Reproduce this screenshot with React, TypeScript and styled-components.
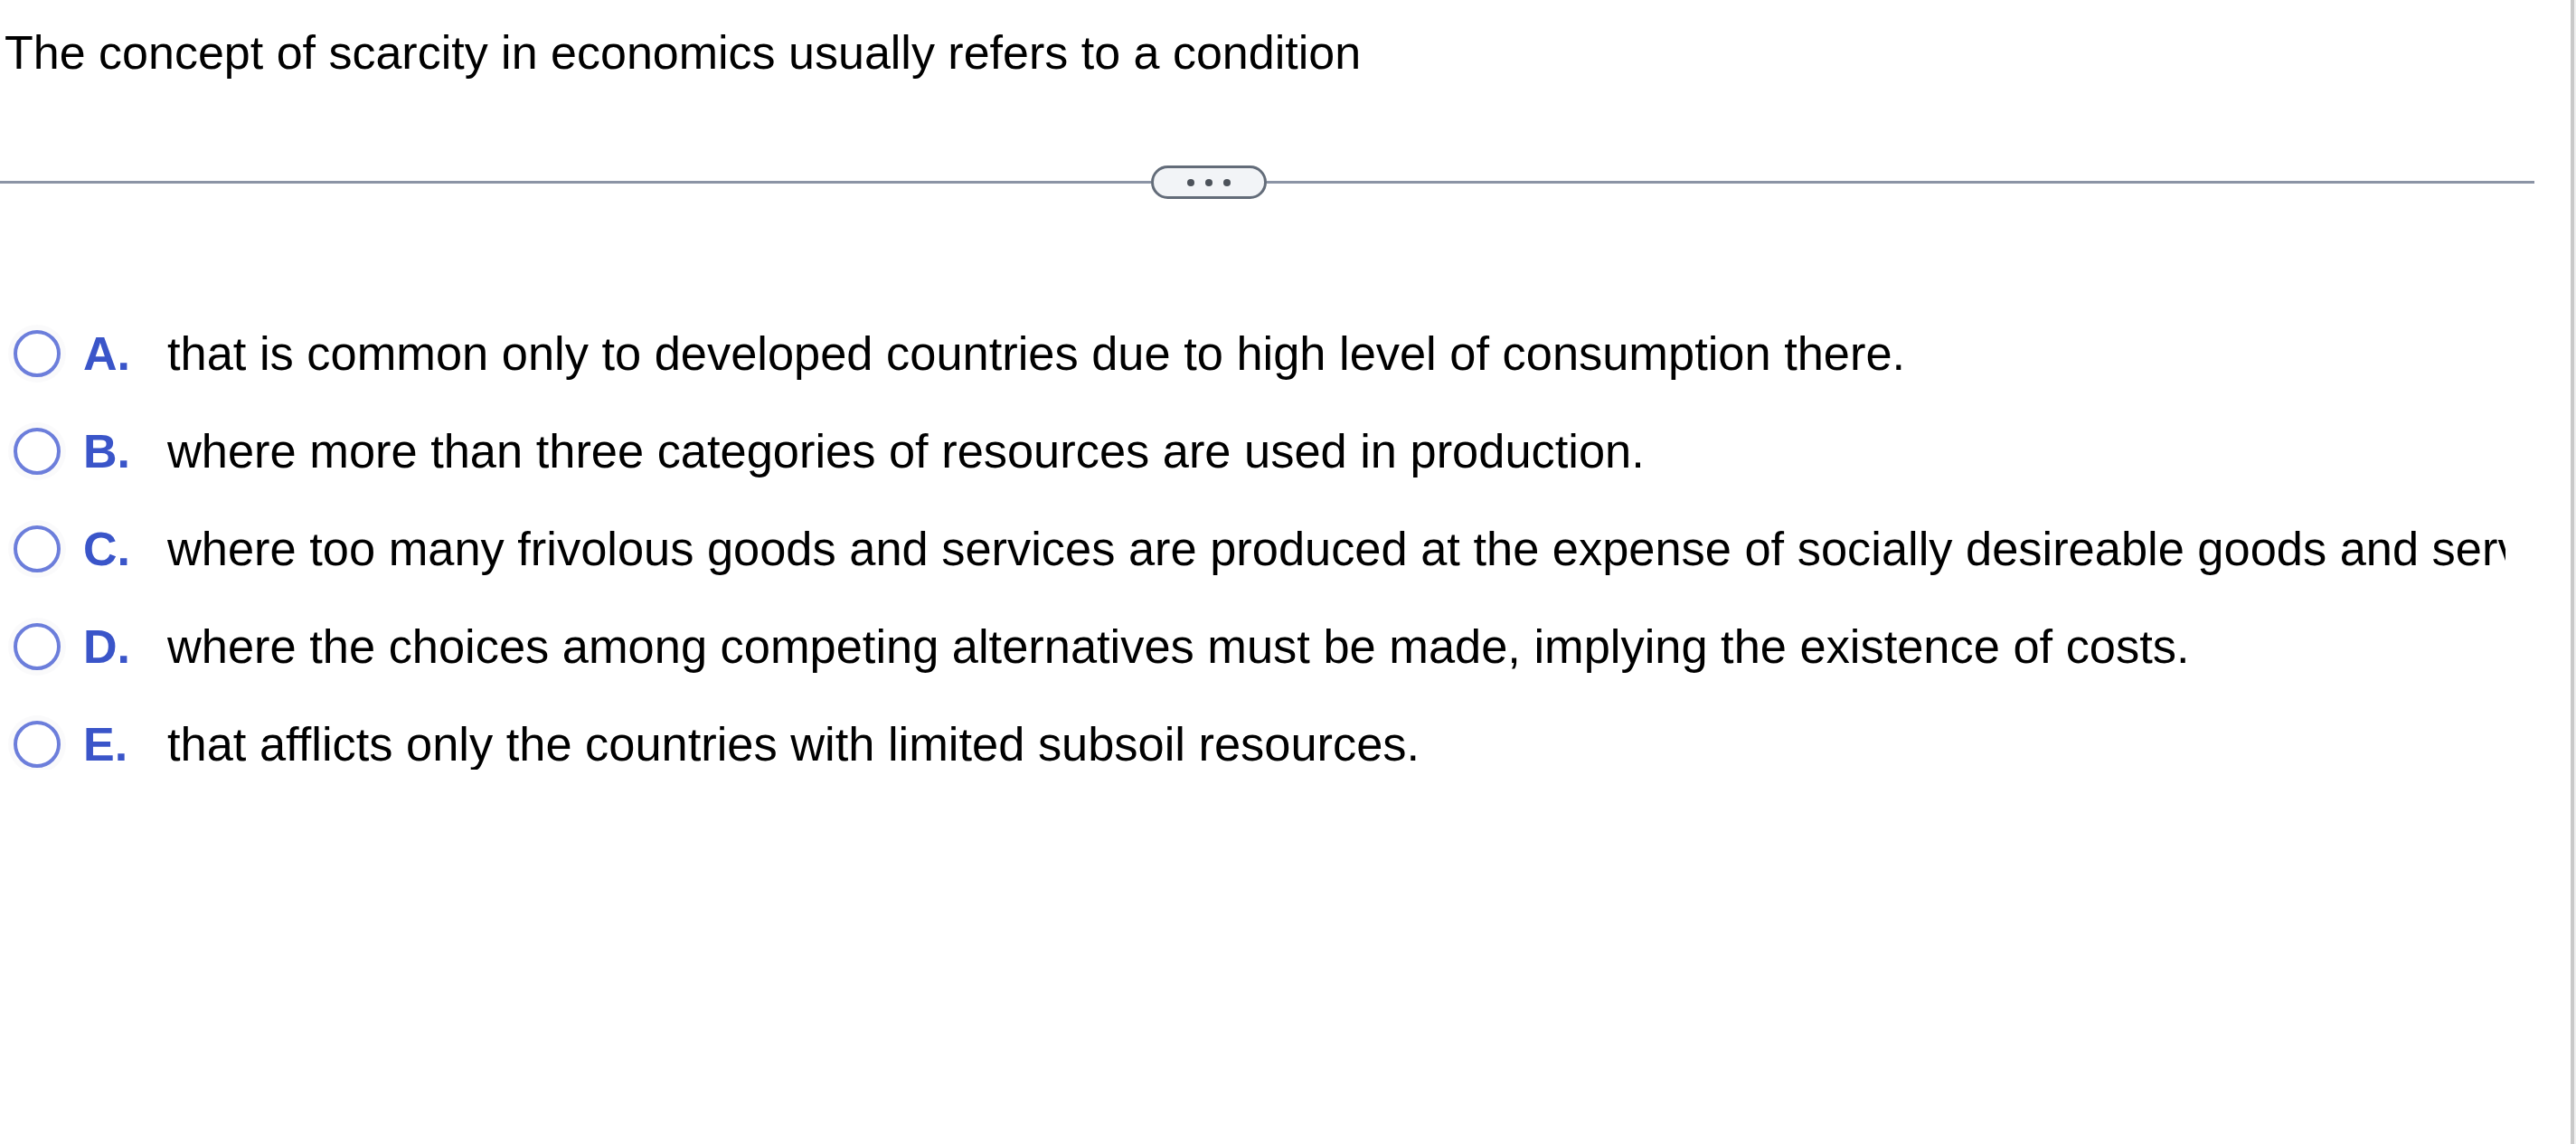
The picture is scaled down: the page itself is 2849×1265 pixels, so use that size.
import * as React from 'react'
import styled, { createGlobalStyle } from 'styled-components'

const GlobalStyle = createGlobalStyle`
  html, body {
    margin: 0;
    padding: 0;
    background: #ffffff;
  }
  body {
    font-family: "Liberation Sans", Arial, Helvetica, sans-serif;
    color: #000;
  }
`

const options = [
  {
    letter: 'A',
    text: 'that is common only to developed countries due to high level of consumption there.'
  },
  {
    letter: 'B',
    text: 'where more than three categories of resources are used in production.'
  },
  {
    letter: 'C',
    text:
      'where too many frivolous goods and services are produced at the expense of socially desireable goods and services.'
  },
  {
    letter: 'D',
    text:
      'where the choices among competing alternatives must be made, implying the existence of costs.'
  },
  {
    letter: 'E',
    text: 'that afflicts only the countries with limited subsoil resources.'
  }
]

export default function App() {
  return (
    <React.Fragment>
      <GlobalStyle />
      <Page>
        <Pane>
          <Question>
            The concept of scarcity in economics usually refers to a condition
          </Question>
          <Divider>
            <LeftRule />
            <MoreButton aria-label="more">
              <Dot />
              <Dot />
              <Dot />
            </MoreButton>
            <RightRule />
          </Divider>
          <OptionList>
            {options.map(o => (
              <OptionRow key={o.letter}>
                <Radio />
                <Letter>{o.letter}.</Letter>
                <OptionText>{o.text}</OptionText>
              </OptionRow>
            ))}
          </OptionList>
        </Pane>
        <ScrollEdge />
      </Page>
    </React.Fragment>
  )
}

const Page = styled.div`
  display: flex;
  width: 2849px;
  height: 1265px;
  overflow: hidden;
`

const Pane = styled.div`
  width: 2843px;
  flex: none;
  background: #fff;
`

const ScrollEdge = styled.div`
  width: 4px;
  flex: none;
  background: #c9c9c9;
  border-right: 2px solid #f0f0f0;
`

const Question = styled.div`
  padding: 29px 0 0 5px;
  font-size: 52px;
  line-height: 58px;
  white-space: nowrap;
`

const Divider = styled.div`
  display: flex;
  align-items: center;
  width: 2803px;
  margin-top: 96px;
`

const LeftRule = styled.div`
  width: 1273px;
  height: 3px;
  background: #8b94a5;
`

const RightRule = styled.div`
  flex: 1;
  height: 3px;
  background: #8b94a5;
`

const MoreButton = styled.div`
  display: flex;
  align-items: center;
  justify-content: center;
  gap: 12px;
  box-sizing: border-box;
  width: 128px;
  height: 37px;
  border: 3px solid #636c79;
  border-radius: 19px;
  background: #f2f4f7;
`

const Dot = styled.span`
  width: 8px;
  height: 8px;
  border-radius: 50%;
  background: #4d535b;
`

const OptionList = styled.div`
  width: 2771px;
  overflow: hidden;
  margin-top: 139px;
  padding-top: 4px;
  display: flex;
  flex-direction: column;
  gap: 52px;
`

const OptionRow = styled.div`
  display: flex;
  align-items: center;
  height: 56px;
  white-space: nowrap;
`

const Radio = styled.span`
  flex: none;
  box-sizing: border-box;
  width: 52px;
  height: 52px;
  margin-left: 15px;
  border: 4px solid #6c7edb;
  border-radius: 50%;
  box-shadow: 0 0 0 6px rgba(120, 130, 160, 0.04);
`

const Letter = styled.span`
  flex: none;
  width: 93px;
  margin-left: 25px;
  font-size: 52px;
  line-height: 56px;
  font-weight: 700;
  color: #3a55c9;
`

const OptionText = styled.span`
  font-size: 52.4px;
  line-height: 56px;
`
